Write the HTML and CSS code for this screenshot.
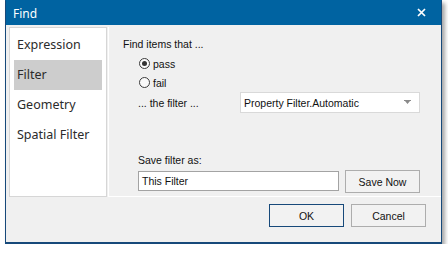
FILE: index.html
```html
<!DOCTYPE html>
<html lang="en">
<head>
    <meta charset="UTF-8">
    <title>Find</title>
    <link rel="stylesheet" href="styles.css">
</head>
<body>
    <div class="window">
        <div class="titlebar">
            <span class="title">Find</span>
            <svg class="close" width="9" height="9" viewBox="0 0 9 9">
                <path d="M1 1 L8 8 M8 1 L1 8" stroke="#fff" stroke-width="1.7"/>
            </svg>
        </div>

        <div class="main">
            <ul class="nav-list">
                <li>Expression</li>
                <li class="selected">Filter</li>
                <li>Geometry</li>
                <li>Spatial Filter</li>
            </ul>

            <div class="panel">
                <div class="lead">Find items that ...</div>
                <label class="radio-row">
                    <span class="radio checked"></span>pass
                </label>
                <label class="radio-row">
                    <span class="radio"></span>fail
                </label>
                <div class="filter-row">
                    <span class="filter-label">... the filter ...</span>
                    <div class="select">
                        <span>Property Filter.Automatic</span>
                        <svg width="7" height="5" viewBox="0 0 7 5">
                            <path d="M0 0 H7 V1 H0 Z M1 1 H6 L3.5 4 Z" fill="#8a8a8a"/>
                        </svg>
                    </div>
                </div>
                <div class="save-label">Save filter as:</div>
                <div class="save-row">
                    <div class="textbox">This Filter</div>
                    <button class="btn">Save Now</button>
                </div>
            </div>
        </div>

        <div class="footer">
            <button class="btn btn-default">OK</button>
            <button class="btn">Cancel</button>
        </div>
    </div>
</body>
</html>
```

FILE: styles.css
```css
:root {
    --title-color: #0063a1;
    --frame-color: #17497a;
    --window-bg: #f0f0f0;
    --text-color: #111;
}

body {
    margin: 0;
    background-color: #fff;
    font-family: 'Liberation Sans', Arial, sans-serif;
    font-size: 10.5px;
    color: var(--text-color);
}

.window {
    margin-left: 5px;
    width: 437px;
    height: 244px;
    box-sizing: border-box;
    border: 1px solid var(--frame-color);
    border-top-color: var(--title-color);
    border-bottom-width: 2px;
    background-color: var(--window-bg);
    box-shadow: 3px 3px 4px rgba(0, 0, 0, 0.35);
    display: flex;
    flex-direction: column;
}

.titlebar {
    height: 24px;
    background-color: var(--title-color);
    color: white;
    display: flex;
    align-items: center;
    justify-content: space-between;
    padding: 0 15px 0 7px;
}

.title {
    font-family: 'Noto Sans', sans-serif;
    font-size: 12px;
}

.close {
    margin-top: -1px;
}

.main {
    display: flex;
    height: 170px;
    margin-top: 2px;
    padding-left: 3px;
}

.nav-list {
    list-style: none;
    margin: 0;
    padding: 2px 4px 0 4px;
    width: 98px;
    box-sizing: border-box;
    background-color: #fff;
    border: 1px solid #d6d6d6;
    font-family: 'Noto Sans', sans-serif;
    font-size: 12.5px;
    color: #2b2b2b;
}

.nav-list li {
    height: 30px;
    line-height: 30px;
    padding-left: 3px;
}

.nav-list .selected {
    background-color: #cdcdcd;
}

.panel {
    flex: 1;
    margin-left: 1px;
    box-sizing: border-box;
    border-left: 1px solid #fff;
    border-bottom: 1px solid #fff;
    padding: 10px 0 0 14px;
}

.lead {
    line-height: 14px;
}

.radio-row {
    display: flex;
    align-items: center;
    height: 19px;
    padding-left: 16px;
}

.radio-row:first-of-type {
    margin-top: 3px;
}

.radio {
    width: 11px;
    height: 11px;
    box-sizing: border-box;
    border: 1px solid #3c3c3c;
    border-radius: 50%;
    background-color: #fafafa;
    margin-right: 3px;
    display: flex;
    align-items: center;
    justify-content: center;
}

.radio.checked::after {
    content: "";
    width: 5px;
    height: 5px;
    border-radius: 50%;
    background-color: #333;
}

.filter-row {
    display: flex;
    align-items: center;
    height: 21px;
    padding-left: 15px;
}

.filter-label {
    width: 102px;
}

.select {
    width: 180px;
    height: 21px;
    box-sizing: border-box;
    border: 1px solid #d9d9d9;
    background-color: #fff;
    display: flex;
    align-items: center;
    justify-content: space-between;
    padding: 0 8px 0 3px;
}

.save-label {
    margin-top: 40px;
    padding-left: 15px;
    line-height: 14px;
}

.save-row {
    display: flex;
    gap: 6px;
    margin-top: 3px;
    padding-left: 15px;
}

.textbox {
    width: 201px;
    height: 20px;
    margin-top: 1px;
    box-sizing: border-box;
    border: 1px solid #a3a3a3;
    background-color: #fff;
    padding-left: 3px;
    line-height: 18px;
}

.btn {
    width: 75px;
    height: 23px;
    box-sizing: border-box;
    border: 1px solid #adadad;
    background-color: #f2f2f2;
    font-family: inherit;
    font-size: 10.5px;
    color: var(--text-color);
    padding: 0;
}

.btn-default {
    border-color: var(--frame-color);
}

.footer {
    display: flex;
    justify-content: flex-end;
    gap: 7px;
    padding: 7px 15px 0 0;
}
```
